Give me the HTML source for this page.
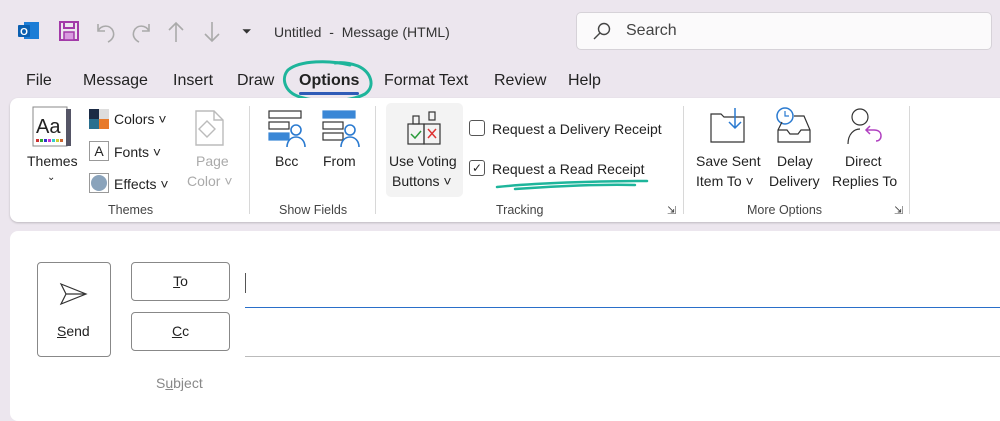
<!DOCTYPE html>
<html><head><meta charset="utf-8"><style>
*{margin:0;padding:0;box-sizing:border-box}
body{width:1000px;height:407px;background:#ece6ee;font-family:"Liberation Sans",sans-serif;color:#222;position:relative;overflow:hidden}
.a{position:absolute;white-space:nowrap}
.t{font-size:14px}
.m{font-size:16px}
.g{font-size:12.5px;color:#444}
.sep{position:absolute;width:1px;background:#d8d8d8}
</style></head><body>
<!-- title bar -->
<svg class="a" style="left:18px;top:20px" width="22" height="22" viewBox="0 0 22 22"><rect x="6" y="2" width="15" height="17" fill="#1c7dd6"/><rect x="0" y="5" width="12" height="12" rx="1" fill="#0a5fb0"/><text x="6" y="15" font-size="10" font-weight="bold" fill="#fff" text-anchor="middle" font-family="Liberation Sans">O</text></svg>
<svg class="a" style="left:58px;top:20px" width="22" height="22" viewBox="0 0 22 22"><rect x="2" y="2" width="18" height="18" fill="none" stroke="#a33aa8" stroke-width="2"/><rect x="6" y="2" width="10" height="6" fill="none" stroke="#a33aa8" stroke-width="2"/><rect x="6" y="12" width="10" height="8" fill="#d99be0" stroke="#a33aa8" stroke-width="1.5"/></svg>
<svg class="a" style="left:94px;top:20px" width="130" height="24" viewBox="0 0 130 24" fill="none" stroke="#aaa" stroke-width="1.6"><path d="M4 4v7h7M4 11c3-6 12-7 15 0 2 5-1 9-5 11"/><path d="M55 4v7h-7M55 11c-3-6-12-7-15 0-2 5 1 9 5 11"/><path d="M82 22V3M75 10l7-7 7 7"/><path d="M118 2v19M111 14l7 7 7-7"/></svg>
<div class="a" style="left:242px;top:24px;font-size:12px;color:#333">⏷</div>
<div class="a t" style="left:274px;top:24px;color:#333">Untitled&nbsp; - &nbsp;Message (HTML)</div>
<div class="a" style="left:576px;top:12px;width:416px;height:38px;background:#fbfafb;border:1px solid #d6d2d8;border-radius:5px"></div>
<svg class="a" style="left:592px;top:21px" width="20" height="20" viewBox="0 0 20 20" fill="none" stroke="#444" stroke-width="1.4"><circle cx="12" cy="8" r="5.5"/><path d="M8 12l-6 6"/></svg>
<div class="a m" style="left:626px;top:22px;color:#444">Search</div>
<!-- tabs -->
<div class="a m" style="left:26px;top:72px">File</div>
<div class="a m" style="left:83px;top:72px">Message</div>
<div class="a m" style="left:173px;top:72px">Insert</div>
<div class="a m" style="left:237px;top:72px">Draw</div>
<div class="a m" style="left:299px;top:72px;font-weight:bold;color:#222">Options</div>
<div class="a" style="left:299px;top:92px;width:60px;height:3px;background:#2f5bb7;border-radius:2px"></div>
<svg class="a" style="left:280px;top:58px" width="96" height="50" viewBox="0 0 96 50"><path d="M70 7C50 2 20 2 8 12 1 20 4 34 20 39 40 45 70 44 85 36 96 28 91 14 78 8 70 5 62 4 55 5" fill="none" stroke="#1eb59b" stroke-width="3" stroke-linecap="round"/></svg>
<div class="a m" style="left:384px;top:72px">Format Text</div>
<div class="a m" style="left:494px;top:72px">Review</div>
<div class="a m" style="left:568px;top:72px">Help</div>
<!-- ribbon -->
<div class="a" style="left:10px;top:98px;width:1000px;height:124px;background:#fff;border-radius:8px;box-shadow:0 1px 2px rgba(0,0,0,.2)"></div>
<!-- themes -->
<svg class="a" style="left:32px;top:106px" width="42" height="42" viewBox="0 0 42 42"><rect x="1" y="1" width="34" height="39" fill="#fff" stroke="#888"/><rect x="34" y="3" width="5" height="37" fill="#556"/><text x="4" y="27" font-size="20" fill="#222" font-family="Liberation Sans">Aa</text><g><rect x="4" y="33" width="3" height="3" fill="#c33"/><rect x="8" y="33" width="3" height="3" fill="#3a3"/><rect x="12" y="33" width="3" height="3" fill="#33c"/><rect x="16" y="33" width="3" height="3" fill="#c3c"/><rect x="20" y="33" width="3" height="3" fill="#3cc"/><rect x="24" y="33" width="3" height="3" fill="#cc3"/><rect x="28" y="33" width="3" height="3" fill="#c63"/></g></svg>
<div class="a t" style="left:27px;top:153px">Themes</div>
<div class="a" style="left:47px;top:172px;font-size:10px">⌄</div>
<svg class="a" style="left:89px;top:109px" width="20" height="20"><rect width="10" height="10" fill="#1b2b45"/><rect x="10" width="10" height="10" fill="#ddd"/><rect y="10" width="10" height="10" fill="#2a6f8e"/><rect x="10" y="10" width="10" height="10" fill="#e87a2a"/></svg>
<div class="a t" style="left:114px;top:111px">Colors ˅</div>
<div class="a" style="left:89px;top:141px;width:20px;height:20px;border:1px solid #999;font-size:14px;text-align:center;line-height:18px">A</div>
<div class="a t" style="left:114px;top:144px">Fonts ˅</div>
<div class="a" style="left:89px;top:173px;width:20px;height:20px;border:1px solid #999;background:#fff"><div style="margin:1px;width:16px;height:16px;border-radius:50%;background:#8aa3bb"></div></div>
<div class="a t" style="left:114px;top:176px">Effects ˅</div>
<svg class="a" style="left:192px;top:109px" width="34" height="38" viewBox="0 0 34 38" fill="none" stroke="#bbb" stroke-width="1.4"><path d="M4 2h18l9 9v25H4z"/><path d="M22 2v9h9"/><path d="M7 20l8-8 8 8-8 8z"/></svg>
<div class="a t" style="left:196px;top:153px;color:#aaa">Page</div>
<div class="a t" style="left:187px;top:173px;color:#aaa">Color ˅</div>
<div class="a g" style="left:108px;top:203px">Themes</div>
<div class="sep" style="left:249px;top:106px;height:108px"></div>
<!-- show fields -->
<svg class="a" style="left:268px;top:110px" width="38" height="38" viewBox="0 0 38 38" fill="none" stroke="#333" stroke-width="1.2"><rect x="1" y="1" width="32" height="7"/><rect x="1" y="12" width="20" height="7"/><rect x="1" y="23" width="20" height="7" fill="#3a87d6" stroke="#3a87d6"/><circle cx="28" cy="20" r="5" stroke="#2a7ad0" stroke-width="1.6" fill="#fff"/><path d="M19 37c0-6 4-10 9-10s9 4 9 10" stroke="#2a7ad0" stroke-width="1.6" fill="#fff"/></svg>
<div class="a t" style="left:275px;top:153px">Bcc</div>
<svg class="a" style="left:322px;top:110px" width="38" height="38" viewBox="0 0 38 38" fill="none" stroke="#333" stroke-width="1.2"><rect x="1" y="1" width="32" height="7" fill="#3a87d6" stroke="#3a87d6"/><rect x="1" y="12" width="20" height="7"/><rect x="1" y="23" width="20" height="7"/><circle cx="28" cy="20" r="5" stroke="#2a7ad0" stroke-width="1.6" fill="#fff"/><path d="M19 37c0-6 4-10 9-10s9 4 9 10" stroke="#2a7ad0" stroke-width="1.6" fill="#fff"/></svg>
<div class="a t" style="left:323px;top:153px">From</div>
<div class="a g" style="left:279px;top:203px">Show Fields</div>
<div class="sep" style="left:375px;top:106px;height:108px"></div>
<!-- tracking -->
<div class="a" style="left:386px;top:103px;width:77px;height:94px;background:#f3f3f3;border-radius:5px"></div>
<svg class="a" style="left:405px;top:110px" width="38" height="36" viewBox="0 0 38 36" fill="none" stroke="#333" stroke-width="1.2"><rect x="3" y="14" width="16" height="20"/><rect x="19" y="14" width="16" height="20"/><rect x="8" y="6" width="6" height="8"/><rect x="24" y="2" width="6" height="8"/><path d="M6 24l4 4 6-7" stroke="#2a9a3a" stroke-width="1.5"/><path d="M23 19l8 9M31 19l-8 9" stroke="#d33" stroke-width="1.5"/></svg>
<div class="a t" style="left:389px;top:153px">Use Voting</div>
<div class="a t" style="left:392px;top:173px">Buttons ˅</div>
<div class="a" style="left:469px;top:120px;width:16px;height:16px;border:1px solid #555;border-radius:3px"></div>
<div class="a t" style="left:492px;top:121px">Request a Delivery Receipt</div>
<div class="a" style="left:469px;top:160px;width:16px;height:16px;border:1px solid #555;border-radius:3px;font-size:12px;line-height:14px;text-align:center">✓</div>
<div class="a t" style="left:492px;top:161px">Request a Read Receipt</div>
<svg class="a" style="left:495px;top:178px" width="155" height="14" viewBox="0 0 155 14"><path d="M2 9C40 5 100 3 152 3M20 11C60 8 110 6 140 7" fill="none" stroke="#1eb59b" stroke-width="2.5" stroke-linecap="round"/></svg>
<div class="a g" style="left:496px;top:203px">Tracking</div>
<div class="a" style="left:667px;top:204px;font-size:11px;color:#444">⇲</div>
<div class="sep" style="left:683px;top:106px;height:108px"></div>
<!-- more options -->
<svg class="a" style="left:708px;top:106px" width="40" height="40" viewBox="0 0 40 40" fill="none" stroke="#333" stroke-width="1.2"><path d="M3 8h10l3 3h20v25H3z"/><path d="M27 2v20M21 16l6 6 6-6" stroke="#2a7ad0" stroke-width="1.5"/></svg>
<div class="a t" style="left:696px;top:153px">Save Sent</div>
<div class="a t" style="left:696px;top:173px">Item To ˅</div>
<svg class="a" style="left:773px;top:106px" width="42" height="40" viewBox="0 0 42 40" fill="none" stroke="#333" stroke-width="1.2"><circle cx="12" cy="10" r="8" stroke="#2a7ad0" stroke-width="1.5" fill="#fff"/><path d="M12 5v5h4" stroke="#2a7ad0"/><path d="M21 10h10l6 14v12H5V24l4-8M5 24h9l3 4h8l3-4h9"/></svg>
<div class="a t" style="left:777px;top:153px">Delay</div>
<div class="a t" style="left:769px;top:173px">Delivery</div>
<svg class="a" style="left:845px;top:106px" width="40" height="40" viewBox="0 0 40 40" fill="none" stroke="#333" stroke-width="1.2"><circle cx="15" cy="11" r="8"/><path d="M3 38c0-10 6-15 12-15"/><path d="M36 30c0-4-3-6-7-6h-8M25 20l-4 4 4 4M36 30c0 3-2 5-5 5" stroke="#b040c0" stroke-width="1.5"/></svg>
<div class="a t" style="left:845px;top:153px">Direct</div>
<div class="a t" style="left:832px;top:173px">Replies To</div>
<div class="a g" style="left:747px;top:203px">More Options</div>
<div class="a" style="left:894px;top:204px;font-size:11px;color:#444">⇲</div>
<div class="sep" style="left:909px;top:106px;height:108px"></div>
<!-- compose -->
<div class="a" style="left:10px;top:231px;width:1000px;height:190px;background:#fff;border-radius:8px"></div>
<div class="a" style="left:37px;top:262px;width:74px;height:95px;border:1px solid #888;border-radius:4px"></div>
<svg class="a" style="left:59px;top:282px" width="30" height="24" viewBox="0 0 30 24" fill="none" stroke="#333" stroke-width="1.2"><path d="M2 2l25 10L2 22l5-10z M7 12h20"/></svg>
<div class="a t" style="left:57px;top:323px"><u>S</u>end</div>
<div class="a" style="left:131px;top:262px;width:99px;height:39px;border:1px solid #888;border-radius:4px;font-size:14px;text-align:center;line-height:37px"><u>T</u>o</div>
<div class="a" style="left:131px;top:312px;width:99px;height:39px;border:1px solid #888;border-radius:4px;font-size:14px;text-align:center;line-height:37px"><u>C</u>c</div>
<div class="a" style="left:245px;top:273px;width:1px;height:20px;background:#555"></div>
<div class="a" style="left:245px;top:307px;width:760px;height:1px;background:#2a6fc9"></div>
<div class="a" style="left:245px;top:356px;width:760px;height:1px;background:#bbb"></div>
<div class="a t" style="left:156px;top:375px;color:#888">S<u>u</u>bject</div>
</body></html>
